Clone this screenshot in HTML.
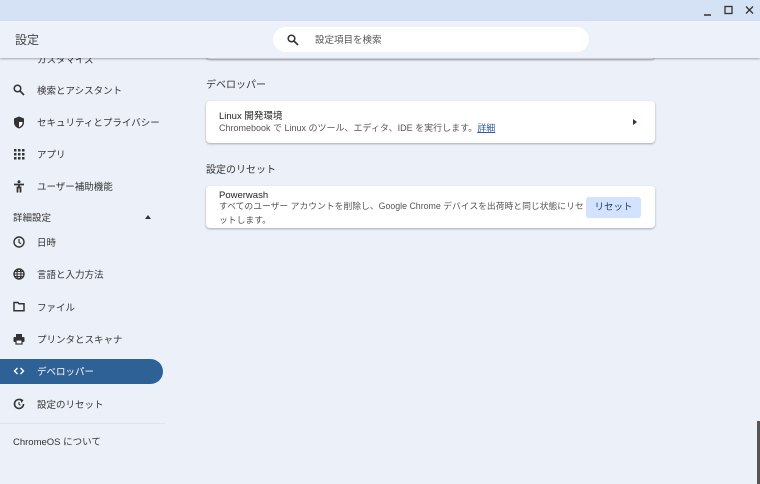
<!DOCTYPE html>
<html><head><meta charset="utf-8"><style>
*{margin:0;padding:0;box-sizing:border-box}
body{width:760px;height:484px;overflow:hidden;background:#ecf0f9;font-family:"Liberation Sans","Noto Sans CJK JP",sans-serif;color:#1f1f1f;position:relative}
.tb{position:absolute;left:0;top:0;width:760px;height:21px;background:#d5e2f6}
.hd{position:absolute;left:0;top:21px;width:760px;height:37px;background:#edf1f9;box-shadow:0 1px 2px rgba(0,0,0,.3);z-index:2}
.ttl{position:absolute;left:15px;top:10px;font-size:12px;color:#444}
.sb{position:absolute;left:273px;top:6px;width:316px;height:25px;background:#fff;border-radius:13px}
.sb span{position:absolute;left:42px;top:5px;font-size:9.5px;color:#555}
.nav{position:absolute;left:0;font-size:9.5px;color:#333;height:25px;width:163px;white-space:nowrap}
.nav svg{position:absolute;left:13px;top:6px}
.nav span{position:absolute;left:37px;top:5px}
.sel{background:#2e6196;color:#fff;border-radius:0 13px 13px 0}
.h{position:absolute;left:206px;font-size:10px;color:#333}
.card{position:absolute;left:206px;width:449px;height:42px;background:#fff;border-radius:4px;box-shadow:0 1px 2px rgba(0,0,0,.3)}
.t1{position:absolute;left:13px;top:7px;font-size:9.5px;color:#222}
.t2{position:absolute;left:13px;top:20px;font-size:9px;color:#555;line-height:14px}
</style></head><body>
<div class="tb">
<svg style="position:absolute;left:700px;top:5px" width="56" height="12"><path d="M4 10h7" stroke="#333" stroke-width="1.5"/><rect x="25" y="1.5" width="7" height="7" fill="none" stroke="#333" stroke-width="1.3"/><path d="M46 1.5l7 7M53 1.5l-7 7" stroke="#333" stroke-width="1.3"/></svg>
</div>
<div class="hd"><div class="ttl">設定</div>
<div class="sb"><svg style="position:absolute;left:14px;top:7px" width="12" height="12"><circle cx="4.5" cy="4.5" r="3.3" fill="none" stroke="#333" stroke-width="1.5"/><path d="M7 7l4 4" stroke="#333" stroke-width="1.6"/></svg><span>設定項目を検索</span></div></div>
<div style="position:absolute;left:206px;top:50px;width:449px;height:9px;background:#fff;box-shadow:0 1px 2px rgba(0,0,0,.3);border-radius:0 0 4px 4px"></div>
<div class="nav" style="top:47px"><span>カスタマイズ</span></div>
<div class="nav" style="top:78px"><svg width="12" height="12"><circle cx="4.5" cy="4.5" r="3.3" fill="none" stroke="#333" stroke-width="1.5"/><path d="M7 7l4 4" stroke="#333" stroke-width="1.6"/></svg><span>検索とアシスタント</span></div>
<div class="nav" style="top:110px"><svg width="12" height="13"><path d="M6 0.5L1 2.5v4c0 3 2.3 5.3 5 6 2.7-.7 5-3 5-6v-4z" fill="#333"/><path d="M6 2v9c2-.6 3.5-2.4 3.5-4.5V6H6z" fill="#fff"/></svg><span>セキュリティとプライバシー</span></div>
<div class="nav" style="top:142px"><svg width="12" height="12"><g fill="#333"><rect x="1" y="1" width="2.5" height="2.5"/><rect x="5" y="1" width="2.5" height="2.5"/><rect x="9" y="1" width="2.5" height="2.5"/><rect x="1" y="5" width="2.5" height="2.5"/><rect x="5" y="5" width="2.5" height="2.5"/><rect x="9" y="5" width="2.5" height="2.5"/><rect x="1" y="9" width="2.5" height="2.5"/><rect x="5" y="9" width="2.5" height="2.5"/><rect x="9" y="9" width="2.5" height="2.5"/></g></svg><span>アプリ</span></div>
<div class="nav" style="top:174px"><svg width="12" height="13"><circle cx="6" cy="1.8" r="1.5" fill="#333"/><path d="M1 4.5h10M6 4.5v3M4.5 12.5v-5h3v5" stroke="#333" stroke-width="1.8" fill="none"/></svg><span>ユーザー補助機能</span></div>
<div class="nav" style="top:205px"><span style="left:13px">詳細設定</span><svg style="left:145px;top:10px" width="6" height="4"><path d="M0 4L3 0 6 4z" fill="#333"/></svg></div>
<div class="nav" style="top:230px"><svg width="12" height="12"><circle cx="6" cy="6" r="5" fill="none" stroke="#333" stroke-width="1.4"/><path d="M6 3v3.3l2 1.5" stroke="#333" stroke-width="1.2" fill="none"/></svg><span>日時</span></div>
<div class="nav" style="top:262px"><svg width="12" height="12"><circle cx="6" cy="6" r="5" fill="none" stroke="#333" stroke-width="1.4"/><ellipse cx="6" cy="6" rx="2" ry="5" fill="none" stroke="#333" stroke-width="1.1"/><path d="M1 6h10M2 3.5h8M2 8.5h8" stroke="#333" stroke-width="1"/></svg><span>言語と入力方法</span></div>
<div class="nav" style="top:295px"><svg width="12" height="11"><path d="M1 1.5h4l1 1.3h5v7H1z" fill="none" stroke="#333" stroke-width="1.5"/></svg><span>ファイル</span></div>
<div class="nav" style="top:327px"><svg width="12" height="12"><rect x="3" y="1" width="6" height="3" fill="#333"/><rect x="0.5" y="4" width="11" height="5" rx="1" fill="#333"/><rect x="3" y="7" width="6" height="4" fill="#fff" stroke="#333" stroke-width="1.2"/></svg><span>プリンタとスキャナ</span></div>
<div class="nav sel" style="top:359px"><svg width="12" height="12"><path d="M4.5 3L1.5 6l3 3M7.5 3l3 3-3 3" stroke="#fff" stroke-width="1.4" fill="none"/></svg><span>デベロッパー</span></div>
<div class="nav" style="top:392px"><svg width="12" height="12"><path d="M10.5 6A4.5 4.5 0 1 1 8.5 2.2" fill="none" stroke="#333" stroke-width="1.6"/><path d="M7 0.5l3.5 1.5-2 3z" fill="#333"/><path d="M6 4v2.3l1.5 1" stroke="#333" stroke-width="1.1" fill="none"/></svg><span>設定のリセット</span></div>
<div style="position:absolute;left:0;top:423px;width:165px;height:1px;background:#dfe4ee"></div>
<div class="nav" style="top:429px"><span style="left:13px">ChromeOS について</span></div>
<div class="h" style="top:76px">デベロッパー</div>
<div class="card" style="top:101px"><div class="t1">Linux 開発環境</div><div class="t2">Chromebook で Linux のツール、エディタ、IDE を実行します。<u style="color:#2e5c99">詳細</u></div>
<svg style="position:absolute;left:427px;top:18px" width="4" height="6"><path d="M0 0l4 3-4 3z" fill="#333"/></svg></div>
<div class="h" style="top:161px">設定のリセット</div>
<div class="card" style="top:186px"><div class="t1" style="top:4px">Powerwash</div><div class="t2" style="top:13px;width:368px;font-size:8.8px">すべてのユーザー アカウントを削除し、Google Chrome デバイスを出荷時と同じ状態にリセットします。</div>
<div style="position:absolute;left:380px;top:11px;width:55px;height:21px;background:#d3e3fd;border-radius:3px;font-size:9.5px;color:#1f3a60;text-align:center;line-height:21px">リセット</div></div>
<div style="position:absolute;left:757px;top:421px;width:3px;height:63px;background:#555"></div>
</body></html>
